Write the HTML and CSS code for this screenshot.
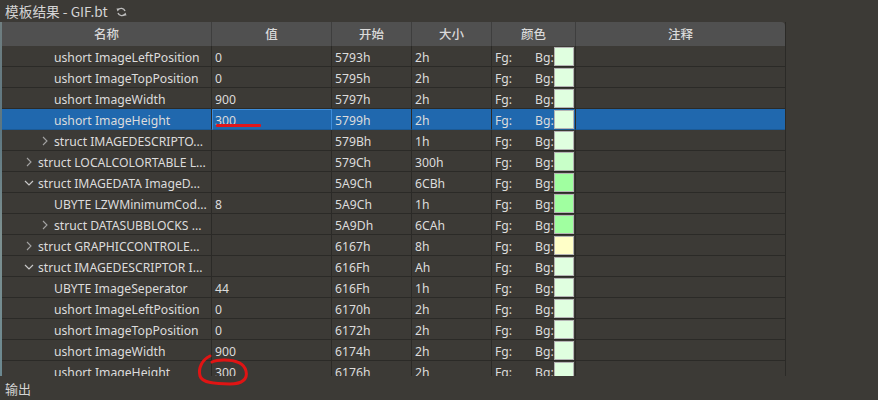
FILE: index.html
```html
<!DOCTYPE html>
<html>
<head>
<meta charset="utf-8">
<link rel="stylesheet" href="styles.css">
</head>
<body>
<div class="titlebar">
  <span class="title">模板结果 - GIF.bt</span>
  <svg class="refresh" width="11" height="10" viewBox="0 0 11 10">
    <path d="M9 4 A4 4 0 0 0 2 3" fill="none" stroke="#bdbdbd" stroke-width="1.4"/>
    <path d="M2 6 A4 4 0 0 0 9 7" fill="none" stroke="#bdbdbd" stroke-width="1.4"/>
    <path d="M0.5 1.5 L3.5 1.5 L1.5 4.5 Z" fill="#bdbdbd"/>
    <path d="M10.5 8.5 L7.5 8.5 L9.5 5.5 Z" fill="#bdbdbd"/>
  </svg>
</div>
<div class="main">
  <div class="strip"></div>
  <div class="table">
    <div class="row head">
      <div class="cell">名称</div>
      <div class="cell">值</div>
      <div class="cell">开始</div>
      <div class="cell">大小</div>
      <div class="cell">颜色</div>
      <div class="cell last">注释</div>
    </div>
    <div class="body">
      <div class="row"><div class="cell name l2">ushort ImageLeftPosition</div><div class="cell">0</div><div class="cell">5793h</div><div class="cell">2h</div><div class="cell color"><span>Fg:</span><span>Bg:</span><i class="sw c1"></i></div><div class="cell"></div></div>
      <div class="row"><div class="cell name l2">ushort ImageTopPosition</div><div class="cell">0</div><div class="cell">5795h</div><div class="cell">2h</div><div class="cell color"><span>Fg:</span><span>Bg:</span><i class="sw c1"></i></div><div class="cell"></div></div>
      <div class="row"><div class="cell name l2">ushort ImageWidth</div><div class="cell">900</div><div class="cell">5797h</div><div class="cell">2h</div><div class="cell color"><span>Fg:</span><span>Bg:</span><i class="sw c1"></i></div><div class="cell"></div></div>
      <div class="row sel"><div class="cell name l2">ushort ImageHeight</div><div class="cell focus"><span class="mark">300</span></div><div class="cell">5799h</div><div class="cell">2h</div><div class="cell color"><span>Fg:</span><span>Bg:</span><i class="sw c1"></i></div><div class="cell"></div></div>
      <div class="row"><div class="cell name l2"><svg class="chev" width="13" height="10" viewBox="0 0 13 10"><path d="M3 1 L7 5 L3 9" fill="none" stroke="#a3a3a3" stroke-width="1.1"/></svg>struct IMAGEDESCRIPTO...</div><div class="cell"></div><div class="cell">579Bh</div><div class="cell">1h</div><div class="cell color"><span>Fg:</span><span>Bg:</span><i class="sw c1"></i></div><div class="cell"></div></div>
      <div class="row"><div class="cell name l1"><svg class="chev" width="13" height="10" viewBox="0 0 13 10"><path d="M3 1 L7 5 L3 9" fill="none" stroke="#a3a3a3" stroke-width="1.1"/></svg>struct LOCALCOLORTABLE L...</div><div class="cell"></div><div class="cell">579Ch</div><div class="cell">300h</div><div class="cell color"><span>Fg:</span><span>Bg:</span><i class="sw c2"></i></div><div class="cell"></div></div>
      <div class="row"><div class="cell name l1"><svg class="chev" width="13" height="10" viewBox="0 0 13 10"><path d="M1 3 L5 7 L9 3" fill="none" stroke="#c8c8c8" stroke-width="1.2"/></svg>struct IMAGEDATA ImageD...</div><div class="cell"></div><div class="cell">5A9Ch</div><div class="cell">6CBh</div><div class="cell color"><span>Fg:</span><span>Bg:</span><i class="sw c3"></i></div><div class="cell"></div></div>
      <div class="row"><div class="cell name l2">UBYTE LZWMinimumCod...</div><div class="cell">8</div><div class="cell">5A9Ch</div><div class="cell">1h</div><div class="cell color"><span>Fg:</span><span>Bg:</span><i class="sw c3"></i></div><div class="cell"></div></div>
      <div class="row"><div class="cell name l2"><svg class="chev" width="13" height="10" viewBox="0 0 13 10"><path d="M3 1 L7 5 L3 9" fill="none" stroke="#a3a3a3" stroke-width="1.1"/></svg>struct DATASUBBLOCKS ...</div><div class="cell"></div><div class="cell">5A9Dh</div><div class="cell">6CAh</div><div class="cell color"><span>Fg:</span><span>Bg:</span><i class="sw c3"></i></div><div class="cell"></div></div>
      <div class="row"><div class="cell name l1"><svg class="chev" width="13" height="10" viewBox="0 0 13 10"><path d="M3 1 L7 5 L3 9" fill="none" stroke="#a3a3a3" stroke-width="1.1"/></svg>struct GRAPHICCONTROLE...</div><div class="cell"></div><div class="cell">6167h</div><div class="cell">8h</div><div class="cell color"><span>Fg:</span><span>Bg:</span><i class="sw c4"></i></div><div class="cell"></div></div>
      <div class="row"><div class="cell name l1"><svg class="chev" width="13" height="10" viewBox="0 0 13 10"><path d="M1 3 L5 7 L9 3" fill="none" stroke="#c8c8c8" stroke-width="1.2"/></svg>struct IMAGEDESCRIPTOR I...</div><div class="cell"></div><div class="cell">616Fh</div><div class="cell">Ah</div><div class="cell color"><span>Fg:</span><span>Bg:</span><i class="sw c1"></i></div><div class="cell"></div></div>
      <div class="row"><div class="cell name l2">UBYTE ImageSeperator</div><div class="cell">44</div><div class="cell">616Fh</div><div class="cell">1h</div><div class="cell color"><span>Fg:</span><span>Bg:</span><i class="sw c1"></i></div><div class="cell"></div></div>
      <div class="row"><div class="cell name l2">ushort ImageLeftPosition</div><div class="cell">0</div><div class="cell">6170h</div><div class="cell">2h</div><div class="cell color"><span>Fg:</span><span>Bg:</span><i class="sw c1"></i></div><div class="cell"></div></div>
      <div class="row"><div class="cell name l2">ushort ImageTopPosition</div><div class="cell">0</div><div class="cell">6172h</div><div class="cell">2h</div><div class="cell color"><span>Fg:</span><span>Bg:</span><i class="sw c1"></i></div><div class="cell"></div></div>
      <div class="row"><div class="cell name l2">ushort ImageWidth</div><div class="cell">900</div><div class="cell">6174h</div><div class="cell">2h</div><div class="cell color"><span>Fg:</span><span>Bg:</span><i class="sw c1"></i></div><div class="cell"></div></div>
      <div class="row"><div class="cell name l2">ushort ImageHeight</div><div class="cell">300</div><div class="cell">6176h</div><div class="cell">2h</div><div class="cell color"><span>Fg:</span><span>Bg:</span><i class="sw c1"></i></div><div class="cell"></div></div>
    </div>
  </div>
</div>
<div class="footer">输出</div>
<svg class="circle" width="56" height="36" viewBox="0 0 56 36">
  <path d="M14 4 C6 8 2 16 4 24 C6 31 20 32 34 32 C46 32 52 27 50 19 C48 11 40 8 28 8 C22 8 18 9 16 10" fill="none" stroke="#e01414" stroke-width="3" stroke-linecap="round"/>
</svg>
</body>
</html>
```
FILE: styles.css
```css
html, body {
  margin: 0;
  padding: 0;
}
body {
  width: 878px;
  height: 400px;
  overflow: hidden;
  background: #3c3a36;
  font-family: "Noto Sans", "Noto Sans CJK SC", sans-serif;
  font-size: 12.2px;
  color: #dcdcdc;
  position: relative;
}
.titlebar {
  height: 22px;
  display: flex;
  align-items: center;
  padding-left: 5px;
  gap: 8px;
  font-family: "Noto Sans CJK SC", "Noto Sans", sans-serif;
  font-size: 13.7px;
  color: #d4d4d4;
}
.title {
  line-height: 20px;
}
.refresh {
  margin-top: 1px;
}
.main {
  display: flex;
  height: 354px;
}
.strip {
  width: 2px;
  background: linear-gradient(#6f7e80, #5d7782 30%, #7d9090 60%, #6b8890);
}
.table {
  width: 784px;
  display: flex;
  flex-direction: column;
  overflow: hidden;
  border-right: 1px solid #2b2a27;
  box-sizing: border-box;
}
.row {
  display: grid;
  grid-template-columns: 210px 120px 80px 80px 84px 209px;
  height: 21px;
  flex: none;
}
.cell {
  box-sizing: border-box;
  border-right: 1px solid #2b2a27;
  border-bottom: 1px solid #2b2a27;
  line-height: 17px;
  padding-top: 3px;
  padding-left: 3px;
  white-space: nowrap;
  overflow: hidden;
  display: flex;
  align-items: center;
}
.row .cell:last-child {
  border-right: none;
}
.head {
  height: 24px;
  background: #505050;
  border-top-right-radius: 4px;
}
.head .cell {
  justify-content: center;
  padding-left: 0;
  padding-top: 0;
  border-bottom: none;
  border-right: 1px solid #3e3e3e;
  line-height: 24px;
  font-family: "Noto Sans CJK SC", sans-serif;
  font-weight: 500;
  font-size: 12.5px;
  color: #dadada;
}
.body {
  flex: 1;
  overflow: hidden;
}
.name {
  padding-left: 0;
}
.name.l1 {
  padding-left: 36px;
}
.name.l2 {
  padding-left: 52px;
}
.chev {
  margin-left: -14px;
  margin-right: 1px;
  margin-top: -2px;
  flex: none;
}
.sel {
  background: #2068ae;
}
.sel .cell {
  border-bottom-color: #1b5a96;
}
.focus {
  border: 1px solid #3d8ddb;
  padding-left: 2px;
  padding-top: 2px;
}
.mark {
  position: relative;
}
.mark::after {
  content: "";
  position: absolute;
  left: 1px;
  top: 12px;
  width: 45px;
  height: 3px;
  background: #e0161a;
  border-radius: 1px;
}
.color {
  padding-left: 3px;
  padding-top: 0;
}
.color span {
  padding-top: 3px;
}
.color span:first-child {
  width: 40px;
}
.color span:nth-child(2) {
  width: 19px;
}
.sw {
  display: block;
  width: 18px;
  height: 17px;
  border: 1px solid #b4b4b4;
}
.c1 { background: #e0ffe0; }
.c2 { background: #c8ffc8; }
.c3 { background: #a0ffa0; }
.c4 { background: #ffffc8; }
.footer {
  height: 24px;
  padding-left: 5px;
  line-height: 26px;
  font-family: "Noto Sans CJK SC", sans-serif;
  font-size: 13px;
  color: #d4d4d4;
}
.circle {
  position: absolute;
  left: 196px;
  top: 352px;
}
```
